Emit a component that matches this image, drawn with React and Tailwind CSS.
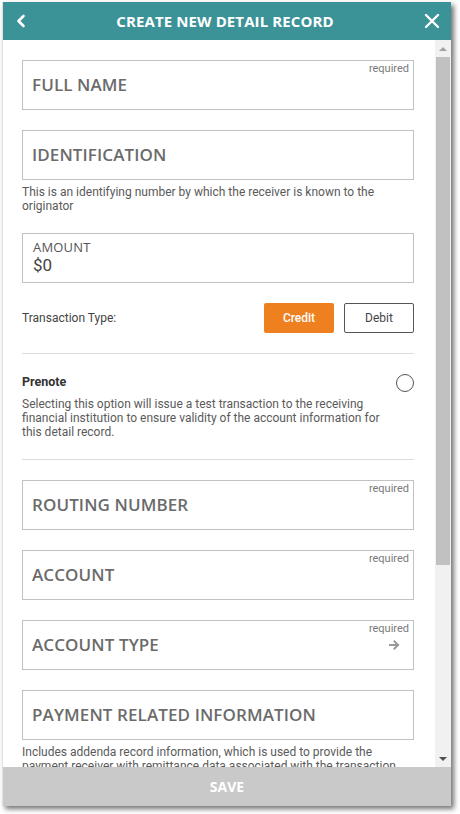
import React from "react";

const label = "font-['Open_Sans',sans-serif] font-semibold text-[17px] tracking-[0.1px] text-[#6b6b6b]";
const body = "font-['Roboto',sans-serif]";

function Field({ name, required, arrow }) {
  return (
    <div className="relative h-[50px] border border-[#c2c2c2] bg-white flex items-center pl-[9px]">
      <span className={label}>{name}</span>
      {required && (
        <span className={`${body} absolute right-[4px] top-[2px] text-[11px] leading-[12px] text-[#7a7a7a]`}>required</span>
      )}
      {arrow && (
        <svg className="absolute right-[13px] top-[19px]" width="11" height="10" viewBox="0 0 11 10" fill="none">
          <path d="M1 5h8M5.5 1.5L9 5L5.5 8.5" stroke="#9a9a9a" strokeWidth="2" strokeLinecap="square" />
        </svg>
      )}
    </div>
  );
}

function Help({ children }) {
  return <p className={`${body} mt-[5px] text-[12px] leading-[14px] text-[#5a5a5a]`}>{children}</p>;
}

export default function App() {
  return (
    <div className="w-[460px] h-[814px] bg-white overflow-hidden pt-[2px] pl-[2px]">
      <div className="w-[449px] h-[804px] flex flex-col bg-white shadow-[3px_3px_5px_rgba(0,0,0,0.55)] border-l border-[#e2e2e2]">
        {/* header */}
        <div className="h-[38px] shrink-0 bg-[#3b9297] flex items-center justify-between px-[13px]">
          <svg width="10" height="14" viewBox="0 0 10 14" fill="none">
            <path d="M7.5 2L2.5 7l5 5" stroke="white" strokeWidth="2.6" strokeLinecap="round" strokeLinejoin="round" />
          </svg>
          <span className="font-['Open_Sans',sans-serif] font-bold text-[15px] text-white tracking-[0.1px]">CREATE NEW DETAIL RECORD</span>
          <svg width="16" height="16" viewBox="0 0 16 16" fill="none" className="mr-[-2px]">
            <path d="M2 2l12 12M14 2L2 14" stroke="white" strokeWidth="2.4" strokeLinecap="round" />
          </svg>
        </div>

        {/* body */}
        <div className="flex-1 flex min-h-0">
          <div className="flex-1 overflow-hidden pt-[20px] pl-[19px] pr-[21px]">
            <Field name="FULL NAME" required />
            <div className="h-[20px]" />
            <Field name="IDENTIFICATION" />
            <Help>This is an identifying number by which the receiver is known to the originator</Help>
            <div className="h-[20px]" />
            <div className="h-[50px] border border-[#c2c2c2] pl-[10px] pt-[5px]">
              <div className="font-['Open_Sans',sans-serif] font-medium text-[13px] leading-[16px] text-[#555] tracking-[0.2px]">AMOUNT</div>
              <div className={`${body} text-[17px] leading-[20px] text-[#444]`}>$0</div>
            </div>
            <div className="h-[20px]" />
            <div className="flex items-center h-[30px]">
              <span className={`${body} text-[12px] text-[#444] flex-1`}>Transaction Type:</span>
              <button className={`${body} w-[70px] h-[30px] bg-[#ef8020] text-white text-[12px] font-medium rounded-[2px]`}>Credit</button>
              <button className={`${body} ml-[10px] w-[70px] h-[30px] bg-white border border-[#555] text-[#444] text-[12px] rounded-[2px]`}>Debit</button>
            </div>
            <div className="h-[20px]" />
            <div className="border-t border-[#dcdcdc]" />
            <div className="pt-[20px] pb-[20px] flex">
              <div className="flex-1">
                <div className={`${body} font-bold text-[12.5px] leading-[16px] text-[#333]`}>Prenote</div>
                <p className={`${body} mt-[7px] text-[12px] leading-[14px] text-[#5a5a5a]`}>
                  Selecting this option will issue a test transaction to the receiving financial institution to ensure validity of the account information for this detail record.
                </p>
              </div>
              <div className="w-[18px] h-[18px] rounded-full border border-[#555] shrink-0" />
            </div>
            <div className="border-t border-[#dcdcdc]" />
            <div className="h-[20px]" />
            <Field name="ROUTING NUMBER" required />
            <div className="h-[20px]" />
            <Field name="ACCOUNT" required />
            <div className="h-[20px]" />
            <Field name="ACCOUNT TYPE" required arrow />
            <div className="h-[20px]" />
            <Field name="PAYMENT RELATED INFORMATION" />
            <Help>Includes addenda record information, which is used to provide the payment receiver with remittance data associated with the transaction.</Help>
          </div>
          {/* scrollbar */}
          <div className="w-[16px] shrink-0 bg-[#f1f1f1] flex flex-col items-center">
            <div className="h-[16px] flex items-center justify-center">
              <svg width="8" height="5" viewBox="0 0 8 5"><path d="M0 5L4 1L8 5Z" fill="#a3a3a3" /></svg>
            </div>
            <div className="mt-[1px] w-[14px] h-[508px] bg-[#c1c1c1]" />
            <div className="flex-1" />
            <div className="h-[16px] flex items-center justify-center">
              <svg width="8" height="5" viewBox="0 0 8 5"><path d="M0 0L4 4L8 0Z" fill="#505050" /></svg>
            </div>
          </div>
        </div>

        {/* footer */}
        <div className="h-[39px] shrink-0 bg-[#c9c9c9] flex items-center justify-center">
          <span className="font-['Open_Sans',sans-serif] font-bold text-[14px] text-white">SAVE</span>
        </div>
      </div>
    </div>
  );
}
